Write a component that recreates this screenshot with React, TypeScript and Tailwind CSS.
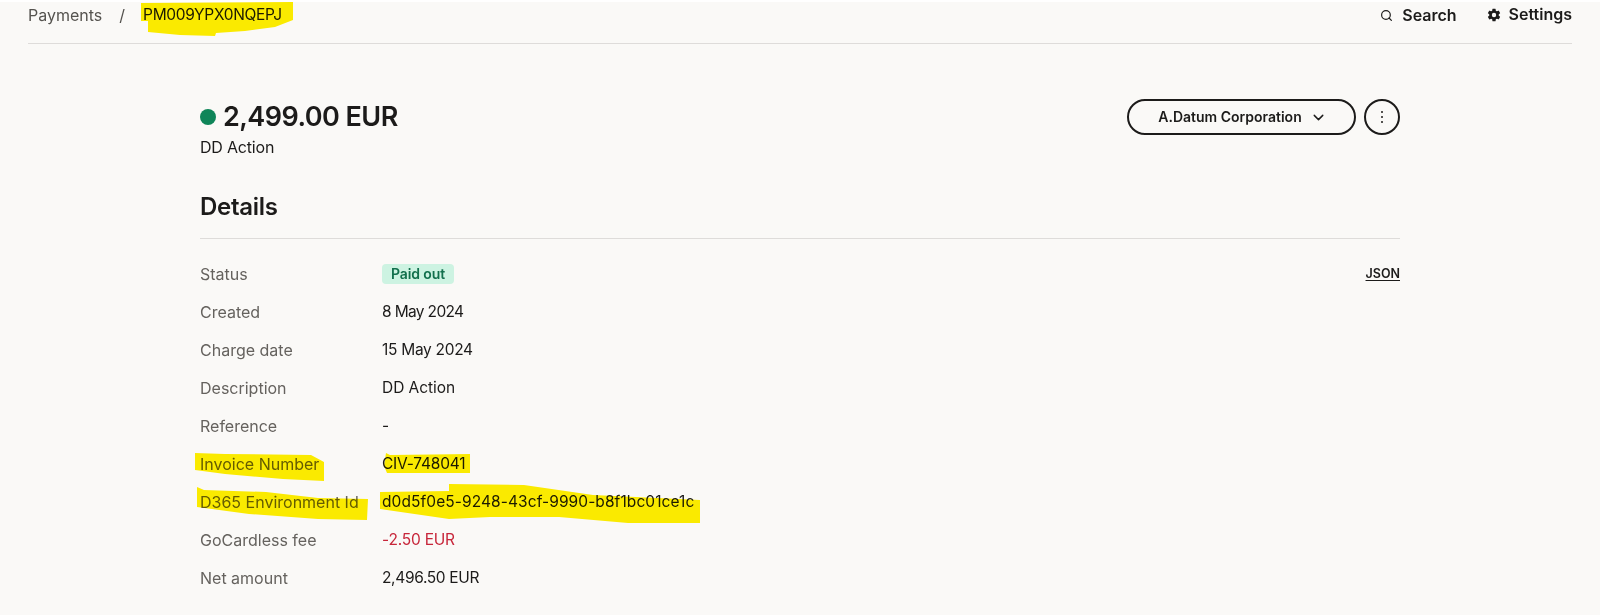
import { ChevronDown, Search } from "lucide-react";
import { IoSettingsSharp } from "react-icons/io5";

const rows = [
  { label: "Created", value: "8 May 2024", valueClass: "tracking-[-0.65px]" },
  { label: "Charge date", value: "15 May 2024", valueClass: "tracking-[-0.3px]" },
  { label: "Description", value: "DD Action", valueClass: "tracking-[-0.05px]" },
  { label: "Reference", value: "-", valueClass: "" },
  { label: "Invoice Number", value: "CIV-748041", valueClass: "tracking-[-0.2px]" },
  { label: "D365 Environment Id", value: "d0d5f0e5-9248-43cf-9990-b8f1bc01ce1c", valueClass: "tracking-[0.08px]" },
];

// the marker strokes someone drew over the screenshot
const marks = [
  "M141 3 L293 2 L293 20 L275 27 L245 31 L216 33 L215 36 L180 35 L148 32 L148 21 L141 21 Z",
  "M195 453 L225 454 L311 455 L324 462 L324 481 L283 479 L225 474 L195 470 Z",
  "M386 453 L390 455 L470 454 L470 473 L430 473 L387 473 L384 466 Z",
  "M197 487 L204 490 L266 492 L318 498 L368 499 L367 520 L318 519 L249 514 L197 507 Z",
  "M380 492 L449 491 L449 484 L524 485 L593 495 L700 500 L700 523 L628 523 L559 517 L490 517 L449 519 L380 509 Z",
];

const App = () => {
  return (
    <div className="relative h-[615px] overflow-hidden bg-[#faf9f7] font-['Inter',sans-serif] text-[#1c1b1a]">
      <div className="h-[2px] bg-white" />
      <header className="mx-[28px] flex h-[42px] items-center justify-between border-b border-[#dedcda] pb-[15px]">
        <nav className="flex items-center text-[16px] text-[#55534f]">
          <span>Payments</span>
          <span className="ml-[17px]">/</span>
          <span className="ml-[18px] text-[15.5px] tracking-[-0.3px] text-[#1c1b1a]">PM009YPX0NQEPJ</span>
        </nav>
        <div className="flex items-center text-[16px] font-semibold">
          <Search className="mr-[9px] h-[13px] w-[13px]" strokeWidth={2.2} />
          <span>Search</span>
          <IoSettingsSharp className="ml-[30px] mr-[8px] h-[14px] w-[14px]" />
          <span className="-translate-y-px">Settings</span>
        </div>
      </header>

      <main className="mx-auto w-[1200px] pt-[55px]">
        <div className="flex items-start justify-between">
          <div className="pt-[3px]">
            <div className="flex h-[31px] items-center">
              <span className="h-[16px] w-[16px] -translate-y-px rounded-full bg-[#0f8559]" />
              <h1 className="ml-[7px] text-[27px] font-semibold tracking-[-0.55px]">2,499.00 EUR</h1>
            </div>
            <p className="mt-[2px] text-[16px] tracking-[-0.2px]">DD Action</p>
          </div>
          <div className="flex items-center gap-[8px]">
            <button className="flex h-[36px] w-[229px] items-center justify-center rounded-full border-2 border-[#1c1b1a] pl-[2px] text-[14px] font-semibold">
              <span className="-translate-y-px">A.Datum Corporation</span>
              <ChevronDown className="ml-[8px] h-[17px] w-[17px]" strokeWidth={2} />
            </button>
            <button className="flex h-[36px] w-[36px] flex-col items-center justify-center gap-[3px] rounded-full border-2 border-[#1c1b1a]">
              <span className="h-[2px] w-[2px] rounded-full bg-[#1c1b1a]" />
              <span className="h-[2px] w-[2px] rounded-full bg-[#1c1b1a]" />
              <span className="h-[2px] w-[2px] rounded-full bg-[#1c1b1a]" />
            </button>
          </div>
        </div>

        <h2 className="mt-[32px] text-[24px] leading-[32px] font-semibold tracking-[-0.3px]">Details</h2>
        <div className="mt-[15px] border-t border-[#dedcda] pt-[16px] text-[15.5px] leading-[38px]">
          <div className="flex h-[38px] items-center">
            <span className="w-[182px] text-[16px] text-[#65625e]">Status</span>
            <span className="w-[72px] rounded-[4px] bg-[#cdf3e2] text-center text-[14px] leading-[20px] font-semibold tracking-[-0.1px] text-[#12704d]">
              Paid out
            </span>
            <a className="ml-auto text-[12.5px] font-semibold underline underline-offset-2">JSON</a>
          </div>
          {rows.map((row) => (
            <div key={row.label} className="flex h-[38px]">
              <span className="w-[182px] text-[16px] text-[#65625e]">{row.label}</span>
              <span className={row.valueClass}>{row.value}</span>
            </div>
          ))}
          <div className="flex h-[38px]">
            <span className="w-[182px] text-[16px] text-[#65625e]">GoCardless fee</span>
            <span className="tracking-[-0.2px] text-[#c7263a]">-2.50 EUR</span>
          </div>
          <div className="flex h-[38px]">
            <span className="w-[182px] text-[16px] text-[#65625e]">Net amount</span>
            <span className="tracking-[-0.35px]">2,496.50 EUR</span>
          </div>
        </div>
      </main>

      <svg className="pointer-events-none absolute inset-0 mix-blend-multiply" width="1600" height="615">
        {marks.map((d) => (
          <path key={d} d={d} fill="#fff000" />
        ))}
      </svg>
    </div>
  );
};

export default App;
